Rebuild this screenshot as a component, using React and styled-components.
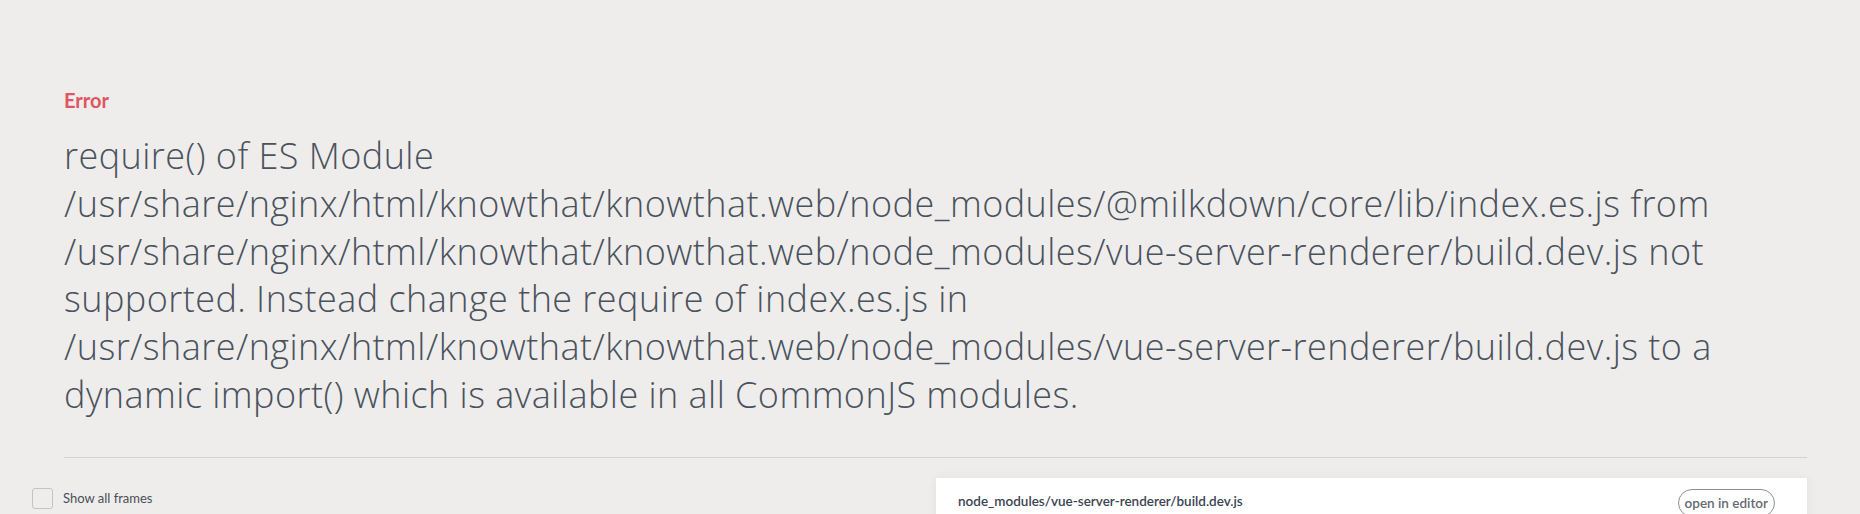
import React from 'react';
import styled, { createGlobalStyle } from 'styled-components';

const GlobalStyle = createGlobalStyle`
  html, body {
    margin: 0;
    padding: 0;
    background: #eeedeb;
  }
  body {
    font-family: Lato, "Open Sans", "Liberation Sans", sans-serif;
    -webkit-font-smoothing: antialiased;
  }
`;

const messageLines = [
  'require() of ES Module',
  '/usr/share/nginx/html/knowthat/knowthat.web/node_modules/@milkdown/core/lib/index.es.js from',
  '/usr/share/nginx/html/knowthat/knowthat.web/node_modules/vue-server-renderer/build.dev.js not',
  'supported. Instead change the require of index.es.js in',
  '/usr/share/nginx/html/knowthat/knowthat.web/node_modules/vue-server-renderer/build.dev.js to a',
  'dynamic import() which is available in all CommonJS modules.',
];

const App = () => {
  return (
    <>
      <GlobalStyle />
      <Page>
        <ErrorName>Error</ErrorName>
        <ErrorMessage>
          {messageLines.map((line) => (
            <MessageLine key={line}>{line}</MessageLine>
          ))}
        </ErrorMessage>
        <Divider />
        <Frames>
          <FramesToggle>
            <Checkbox type="checkbox" />
            Show all frames
          </FramesToggle>
          <FrameCard>
            <FramePath>node_modules/vue-server-renderer/build.dev.js</FramePath>
            <EditorButton>open in editor</EditorButton>
          </FrameCard>
        </Frames>
      </Page>
    </>
  );
};

const Page = styled.div`
  padding: 88px 53px 0 64px;
  height: 514px;
  box-sizing: border-box;
  overflow: hidden;
`;

const ErrorName = styled.div`
  color: #df5563;
  font-size: 20px;
  font-weight: 700;
  line-height: 24px;
`;

const ErrorMessage = styled.h1`
  margin: 20px 0 0 0;
  color: #4a525d;
  font-family: "Open Sans", Lato, sans-serif;
  font-size: 36px;
  font-weight: 300;
  line-height: 47.8px;
  letter-spacing: 0.45px;
`;

const MessageLine = styled.span`
  display: block;
  white-space: nowrap;
`;

const Divider = styled.hr`
  margin: 38px 0 0 0;
  border: 0;
  border-top: 1px solid #d3d2d0;
`;

const Frames = styled.div`
  display: grid;
  grid-template-columns: 1fr 871px;
  margin: 20px 0 0 -32px;
`;

const FramesToggle = styled.label`
  display: flex;
  align-items: center;
  gap: 10px;
  height: 21px;
  margin-top: 10px;
  color: #4a4f57;
  font-size: 13px;
`;

const Checkbox = styled.input`
  appearance: none;
  width: 21px;
  height: 21px;
  margin: 0;
  border: 1px solid #c4c3c1;
  border-radius: 3px;
  background: transparent;
`;

const FrameCard = styled.div`
  display: flex;
  align-items: flex-start;
  justify-content: space-between;
  height: 60px;
  padding: 11px 32px 0 22px;
  box-sizing: border-box;
  background: #ffffff;
  box-shadow: 0 0 10px rgba(0, 0, 0, 0.06);
`;

const FramePath = styled.div`
  margin-top: 4px;
  color: #3a4452;
  font-size: 13.5px;
  font-weight: 600;
`;

const EditorButton = styled.button`
  padding: 5px 6px;
  border: 1px solid #8f8f8f;
  border-radius: 14px;
  background: transparent;
  color: #666a70;
  font-family: inherit;
  font-size: 13.5px;
  font-weight: 600;
  cursor: pointer;
`;

export default App;
